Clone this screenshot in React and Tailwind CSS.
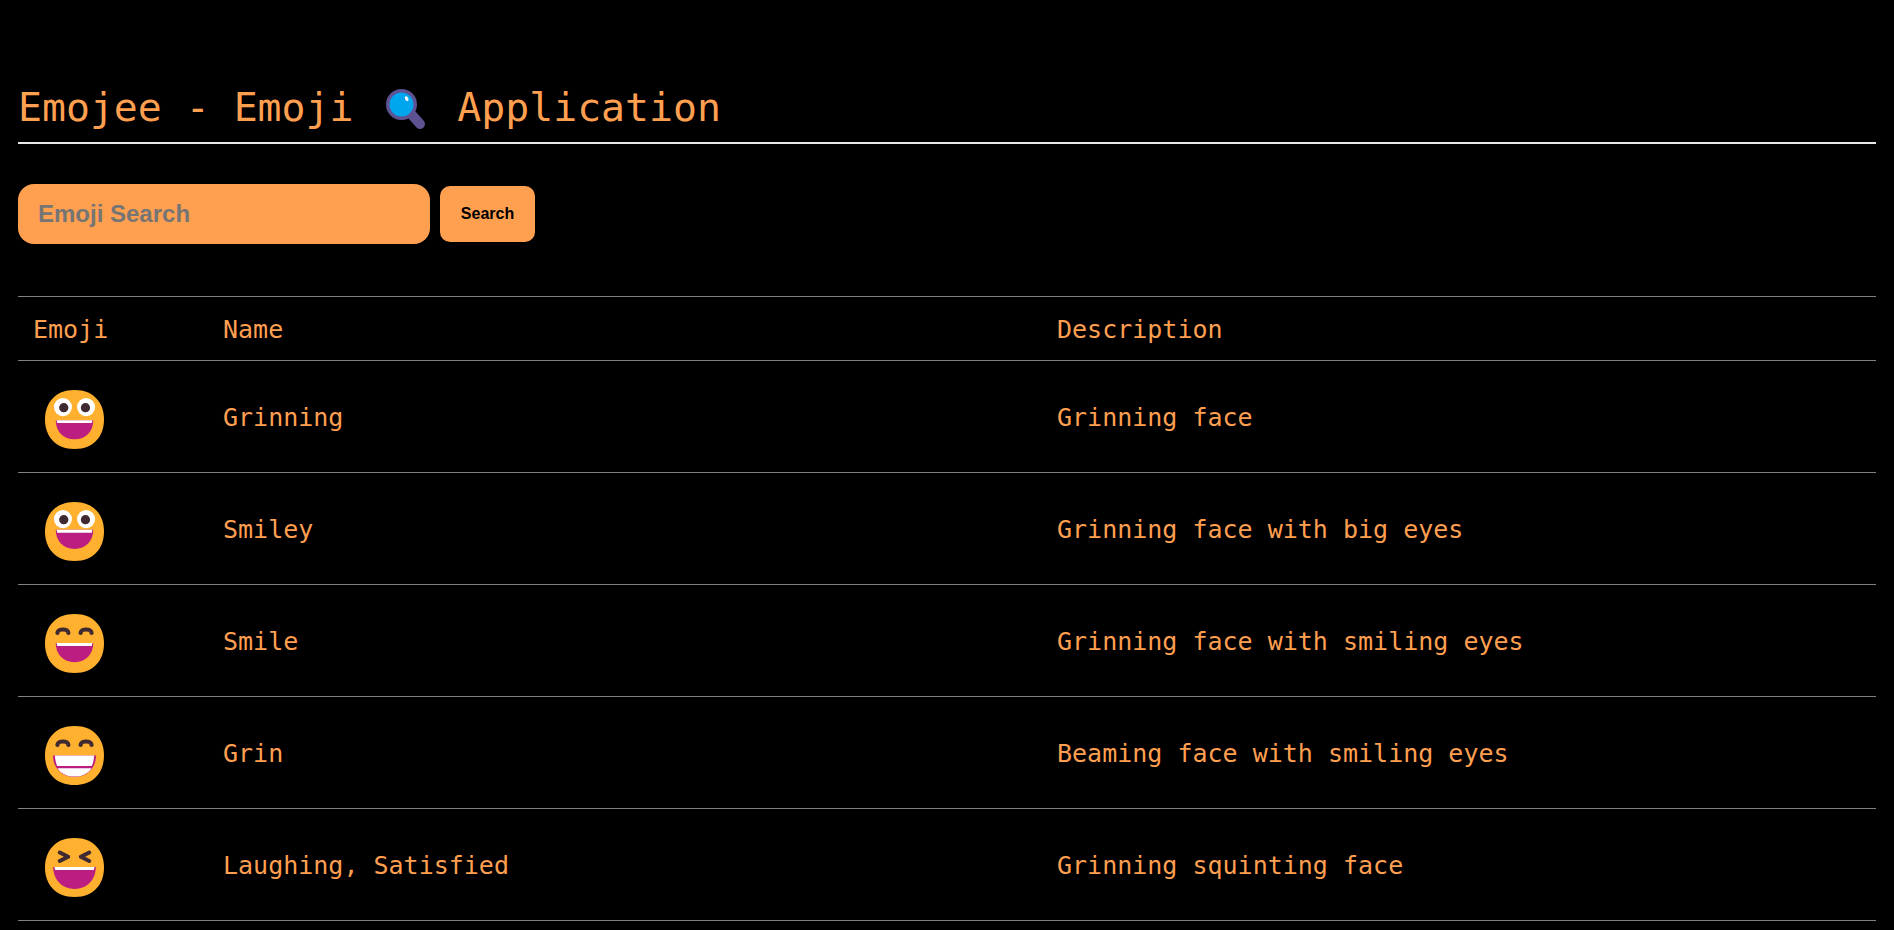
const FACE =
  "M15.9989 29.9978C25.3333 29.9978 29.9978 23.7303 29.9978 15.9989C29.9978 8.26751 25.3333 2 15.9989 2C6.66443 2 2 8.26751 2 15.9989C2 23.7303 6.66443 29.9978 15.9989 29.9978Z";

const Face = ({ children }) => (
  <svg viewBox="2 2 28 28" className="w-[59px] h-[59px] block">
    <path d={FACE} fill="#FFB02E" />
    {children}
  </svg>
);

const OpenMouth = ({ top = 16.3 }) => (
  <>
    <path
      d={`M7.1 ${top}H24.9C24.9 ${top + 5.4} 21.4 ${top + 9.1} 16 ${top + 9.1}C10.6 ${top + 9.1} 7.1 ${top + 5.4} 7.1 ${top}Z`}
      fill="#BB1D80"
    />
    <path d={`M7.5 ${top}H24.5L24.2 ${top + 1.4}H7.8Z`} fill="white" />
  </>
);

const RoundEyes = () => (
  <>
    <circle cx="10.5" cy="10.1" r="4.3" fill="white" />
    <circle cx="21.5" cy="10.1" r="4.3" fill="white" />
    <circle cx="10.9" cy="10.4" r="2.2" fill="#402A32" />
    <circle cx="21.2" cy="10.4" r="2.2" fill="#402A32" />
  </>
);

const ArcEyes = () => (
  <g fill="none" stroke="#402A32" strokeWidth="2" strokeLinecap="round">
    <path d="M7.9 11C7.9 8.8 13.1 8.8 13.1 11" />
    <path d="M18.9 11C18.9 8.8 24.1 8.8 24.1 11" />
  </g>
);

const emojis = {
  grinning: (
    <Face>
      <RoundEyes />
      <OpenMouth />
    </Face>
  ),
  smiley: (
    <Face>
      <RoundEyes />
      <OpenMouth top={15.2} />
    </Face>
  ),
  smile: (
    <Face>
      <ArcEyes />
      <OpenMouth top={15.8} />
    </Face>
  ),
  grin: (
    <Face>
      <ArcEyes />
      <path d="M5.8 16H26.2C26.2 22.2 21.8 26.2 16 26.2C10.2 26.2 5.8 22.2 5.8 16Z" fill="#BB1D80" />
      <path d="M6.7 16H25.3C25.2 18 24.8 19.7 24.2 21H7.8C7.2 19.7 6.8 18 6.7 16Z" fill="white" />
      <path d="M7.9 22H24.1C22.4 24.6 19.4 26 16 26C12.6 26 9.6 24.6 7.9 22Z" fill="white" />
    </Face>
  ),
  laughing: (
    <Face>
      <g fill="none" stroke="#402A32" strokeWidth="1.9" strokeLinecap="round" strokeLinejoin="round">
        <path d="M9 8.9L13 10.9L9 12.9" />
        <path d="M23 8.9L19 10.9L23 12.9" />
      </g>
      <path d="M5.9 15.8H26.1C26.1 22 21.8 26.2 16 26.2C10.2 26.2 5.9 22 5.9 15.8Z" fill="#BB1D80" />
      <path d="M6.5 15.8H25.5L25.2 17.2H6.8Z" fill="white" />
    </Face>
  ),
};

const rows = [
  { icon: "grinning", name: "Grinning", description: "Grinning face" },
  { icon: "smiley", name: "Smiley", description: "Grinning face with big eyes" },
  { icon: "smile", name: "Smile", description: "Grinning face with smiling eyes" },
  { icon: "grin", name: "Grin", description: "Beaming face with smiling eyes" },
  { icon: "laughing", name: "Laughing, Satisfied", description: "Grinning squinting face" },
];

const App = () => {
  return (
    <div className="h-[930px] overflow-hidden bg-black px-[18px] text-[#ff9f50] font-['DejaVu_Sans_Mono',monospace]">
      <h1 className="flex items-center h-[53px] pb-[9px] mt-[80px] text-[39.8px] leading-[60px] whitespace-pre border-b-2 border-[#e8e8e8] box-content">
        <span>Emojee - Emoji </span>
        <svg viewBox="-1 0 56 56" className="w-[56px] h-[56px] mt-[13px]">
          <path d="M34 30L42 39" stroke="#5E5292" strokeWidth="10" strokeLinecap="round" />
          <circle cx="23.5" cy="19.5" r="13.75" fill="#00A6ED" stroke="#5E5292" strokeWidth="3.5" />
          <ellipse cx="28.7" cy="13.7" rx="1.6" ry="2.6" fill="white" transform="rotate(-25 28.7 13.7)" />
        </svg>
        <span> Application</span>
      </h1>

      <form className="flex items-center gap-[10px] mt-[40px]">
        <input
          type="text"
          placeholder="Emoji Search"
          className="w-[412px] h-[60px] pl-5 pr-5 rounded-2xl bg-[#ff9f50] text-2xl font-bold font-['Liberation_Sans',sans-serif] placeholder:text-[#757575] outline-none"
        />
        <button
          type="button"
          className="w-[95px] h-[56px] rounded-[10px] bg-[#ff9f50] text-black text-base font-bold font-['Liberation_Sans',sans-serif]"
        >
          Search
        </button>
      </form>

      <table className="w-[1858px] mt-[52px] table-fixed border-collapse text-[25px] text-left">
        <thead>
          <tr className="h-[64px] border-y border-[#808080]">
            <th className="w-[189px] pl-[15px] pr-4 pt-[2px] font-normal">Emoji</th>
            <th className="w-[834px] px-4 pt-[2px] font-normal">Name</th>
            <th className="px-4 pt-[2px] font-normal">Description</th>
          </tr>
        </thead>
        <tbody>
          {rows.map((row) => (
            <tr key={row.icon} className="h-[112px] border-b border-[#808080]">
              <td className="pl-[27px] pt-[6px]">{emojis[row.icon]}</td>
              <td className="px-4 pt-[3px]">{row.name}</td>
              <td className="px-4 pt-[3px]">{row.description}</td>
            </tr>
          ))}
        </tbody>
      </table>
    </div>
  );
};

export default App;
